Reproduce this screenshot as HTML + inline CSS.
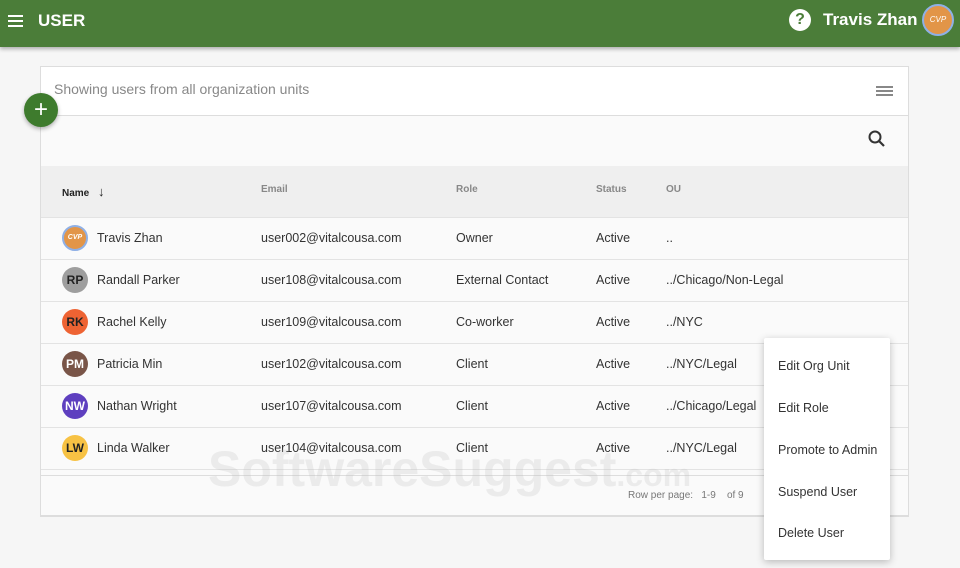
<!DOCTYPE html>
<html><head><style>
body{margin:0;width:960px;height:568px;background:#f6f6f6;font-family:"Liberation Sans",sans-serif;position:relative;overflow:hidden}
.top{position:absolute;left:0;top:0;width:960px;height:47px;background:#4b7d39;box-shadow:0 2px 4px rgba(0,0,0,.3)}
.abs{position:absolute}
.card{position:absolute;left:40px;top:66px;width:867px;height:449px;background:#fafafa;border:1px solid #ddd}
.row{position:absolute;left:0;width:867px;height:41px;border-bottom:1px solid #e3e3e3;font-size:12.5px;color:#333}
.row span{position:absolute;top:13px}
.av{position:absolute;left:21px;top:7px;width:26px;height:26px;border-radius:50%;color:#222;font-weight:bold;font-size:12px;text-align:center;line-height:26px}
.hd{position:absolute;top:18px;font-size:10px;color:#888;font-weight:bold}
.menu{position:absolute;left:764px;top:338px;width:126px;height:222px;background:#fff;box-shadow:0 2px 8px rgba(0,0,0,.25);border-radius:2px;font-size:12.5px;color:#333}
.menu div{position:absolute;left:14px}
</style></head><body>
<div class="top">
<div class="abs" style="left:8px;top:15px;width:15px;height:2px;background:#fff;box-shadow:0 5px 0 #fff,0 10px 0 #fff"></div>
<div class="abs" style="left:38px;top:11px;color:#fff;font-weight:bold;font-size:17px">USER</div>
<div class="abs" style="left:789px;top:9px;width:22px;height:22px;border-radius:50%;background:#fff;color:#4b7d39;font-weight:bold;font-size:16px;text-align:center;line-height:22px">?</div>
<div class="abs" style="left:823px;top:10px;color:#fff;font-weight:bold;font-size:17px">Travis Zhan</div>
<div class="abs" style="left:922px;top:4px;width:32px;height:32px;border-radius:50%;background:#e29548;border:2px solid #8fb0e6;color:#fff;font-size:8px;font-style:italic;text-align:center;line-height:28px;box-sizing:border-box">CVP</div>
</div>
<div class="card">
<div class="abs" style="left:0;top:0;width:867px;height:48px;background:#fff;border-bottom:1px solid #ddd"></div>
<div class="abs" style="left:13px;top:14px;font-size:14px;color:#888">Showing users from all organization units</div>
<div class="abs" style="left:835px;top:19px;width:17px;height:2px;background:#888;box-shadow:0 4px 0 #888,0 8px 0 #888"></div>
<div class="abs" style="left:0;top:49px;width:867px;height:50px;background:#fafafa"></div>
<svg class="abs" style="left:826px;top:62px" width="20" height="20"><circle cx="8" cy="8" r="5.5" stroke="#333" stroke-width="2" fill="none"/><path d="M12 12l5 5" stroke="#333" stroke-width="2.2"/></svg>
<div class="abs" style="left:0;top:99px;width:867px;height:51px;background:#efefef;border-bottom:1px solid #e3e3e3"></div>
<div class="abs" style="top:99px;left:0;width:867px;height:51px">
<div class="hd" style="left:21px;color:#222">Name <span style="font-size:13px;margin-left:6px">↓</span></div>
<div class="hd" style="left:220px">Email</div><div class="hd" style="left:415px">Role</div><div class="hd" style="left:555px">Status</div><div class="hd" style="left:625px">OU</div>
</div>
<div class="row" style="top:151px"><div class="av" style="background:#e29548;border:2px solid #8fb0e6;box-sizing:border-box;color:#fff;font-size:7px;font-style:italic;line-height:22px">CVP</div><span style="left:56px">Travis Zhan</span><span style="left:220px">user002@vitalcousa.com</span><span style="left:415px">Owner</span><span style="left:555px">Active</span><span style="left:625px">..</span></div>
<div class="row" style="top:193px"><div class="av" style="background:#9e9e9e">RP</div><span style="left:56px">Randall Parker</span><span style="left:220px">user108@vitalcousa.com</span><span style="left:415px">External Contact</span><span style="left:555px">Active</span><span style="left:625px">../Chicago/Non-Legal</span></div>
<div class="row" style="top:235px"><div class="av" style="background:#ee6333">RK</div><span style="left:56px">Rachel Kelly</span><span style="left:220px">user109@vitalcousa.com</span><span style="left:415px">Co-worker</span><span style="left:555px">Active</span><span style="left:625px">../NYC</span></div>
<div class="row" style="top:277px"><div class="av" style="background:#795548;color:#fff">PM</div><span style="left:56px">Patricia Min</span><span style="left:220px">user102@vitalcousa.com</span><span style="left:415px">Client</span><span style="left:555px">Active</span><span style="left:625px">../NYC/Legal</span></div>
<div class="row" style="top:319px"><div class="av" style="background:#5e3fbf;color:#fff">NW</div><span style="left:56px">Nathan Wright</span><span style="left:220px">user107@vitalcousa.com</span><span style="left:415px">Client</span><span style="left:555px">Active</span><span style="left:625px">../Chicago/Legal</span></div>
<div class="row" style="top:361px"><div class="av" style="background:#f7c244">LW</div><span style="left:56px">Linda Walker</span><span style="left:220px">user104@vitalcousa.com</span><span style="left:415px">Client</span><span style="left:555px">Active</span><span style="left:625px">../NYC/Legal</span></div>
<div class="abs" style="left:21px;top:410px;width:26px;height:5px;border-radius:13px 13px 0 0;background:#3f9a85"></div>
<div class="abs" style="left:0;top:408px;width:867px;height:40px;border-top:1px solid #ddd;border-bottom:1px solid #ddd;background:#fafafa"></div>
<div class="abs" style="left:587px;top:423px;font-size:10px;color:#777">Row per page: &nbsp; 1-9 &nbsp;&nbsp; of 9</div>
</div>
<div class="abs" style="left:40px;top:515px;width:869px;height:1px;background:#ddd"></div>
<div class="abs" style="left:208px;top:440px;font-size:50px;font-weight:bold;color:rgba(190,190,190,.25)">SoftwareSuggest<span style="font-size:32px">.com</span></div>
<div class="abs" style="left:24px;top:93px;width:34px;height:34px;border-radius:50%;background:#3e7b2d;color:#fff;font-size:24px;text-align:center;line-height:33px;box-shadow:0 2px 4px rgba(0,0,0,.3)">+</div>
<div class="menu"><div style="top:21px">Edit Org Unit</div><div style="top:63px">Edit Role</div><div style="top:105px">Promote to Admin</div><div style="top:147px">Suspend User</div><div style="top:188px">Delete User</div></div>
</body></html>
